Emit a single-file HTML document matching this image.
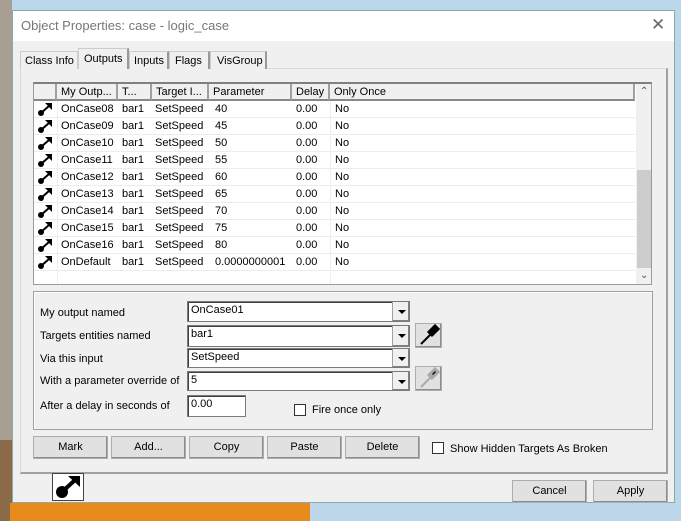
<!DOCTYPE html>
<html><head><meta charset="utf-8"><style>
*{box-sizing:border-box;margin:0;padding:0}
body{width:681px;height:521px;position:relative;overflow:hidden;font-family:"Liberation Sans",sans-serif;font-size:11px;color:#000;background:#bcd6ea}
.a{position:absolute;white-space:nowrap}
.btn{position:absolute;background:#e1e1e1;border:1px solid #adadad;box-shadow:inset -1px -1px 0 #8c8c8c;text-align:center;line-height:20px}
.combo{position:absolute;background:#fff;border:1px solid #7a7a7a;box-shadow:inset 1px 1px 0 #404040;padding:1px 3px;line-height:15px}
.combo .dd{position:absolute;right:0;top:0;bottom:0;width:17px;background:#f0f0f0;border-left:1px solid #a0a0a0;box-shadow:inset -1px -1px 0 #808080}
.combo .dd:after{content:"";position:absolute;left:5px;top:8px;border-left:4px solid transparent;border-right:4px solid transparent;border-top:4px solid #000}
.row{position:absolute;left:0;height:17px;width:601px;border-bottom:1px solid #ececec;line-height:17px;white-space:nowrap}
.row span{position:absolute;top:0}
.hd span{position:absolute;top:0;height:17px;border-right:2px solid #a0a0a0;border-bottom:2px solid #888;padding-left:4px;line-height:16px;background:#f0f0f0;white-space:nowrap;overflow:hidden}
.tab{position:absolute;border:1px solid #ccc;border-right:2px solid #999;border-bottom:none;white-space:nowrap;line-height:13px;background:#f0f0f0}
</style></head><body>
<div class="a" style="left:0;top:0;width:12px;height:521px;background:#a89f94"></div>
<div class="a" style="left:0;top:440px;width:12px;height:81px;background:#8b6a4a"></div>
<div class="a" style="left:10px;top:503px;width:300px;height:18px;background:#e98a1c"></div>
<div class="a" style="left:12px;top:10px;width:663px;height:493px;background:#f0f0f0;border:1px solid #8aa;"></div>
<div class="a" style="left:13px;top:11px;width:661px;height:30px;background:#fff"></div>
<div class="a" style="left:21px;top:18px;font-size:13px;color:#777">Object Properties: case - logic_case</div>
<div class="a" style="left:651px;top:15px;font-size:17px;color:#666">✕</div>
<div class="a" style="left:20px;top:68px;width:648px;height:406px;border:1px solid #d9d9d9;border-right:2px solid #a0a0a0;border-bottom:2px solid #a0a0a0;background:#f0f0f0"></div>
<div class="tab" style="left:20px;top:51px;width:58px;height:18px;padding:3px 4px;border-right:1px solid #ccc">Class Info</div>
<div class="tab" style="left:78px;top:48px;width:51px;height:21px;padding:4px 5px">Outputs</div>
<div class="tab" style="left:129px;top:51px;width:40px;height:18px;padding:3px 4px">Inputs</div>
<div class="tab" style="left:169px;top:51px;width:41px;height:18px;padding:3px 5px">Flags</div>
<div class="tab" style="left:210px;top:51px;width:57px;height:18px;padding:3px 6px">VisGroup</div>
<div class="a" style="left:33px;top:82px;width:619px;height:203px;background:#fff;border:1px solid #9a9a9a;border-top:2px solid #808080;overflow:hidden">
 <div class="hd" style="position:absolute;left:0;top:0;width:601px;height:17px">
  <span style="left:0;width:23px"></span>
  <span style="left:23px;width:61px">My Outp...</span>
  <span style="left:84px;width:34px">T...</span>
  <span style="left:118px;width:57px">Target I...</span>
  <span style="left:175px;width:83px">Parameter</span>
  <span style="left:258px;width:38px">Delay</span>
  <span style="left:296px;width:305px">Only Once</span>
 </div>
 <div class="a" style="left:23px;top:17px;width:1px;height:186px;background:#eee"></div>
 <div class="a" style="left:296px;top:17px;width:1px;height:186px;background:#eee"></div>
 <div id="rows"></div>
 <div class="a" style="left:602px;top:0;width:16px;height:201px;background:#f0f0f0">
  <div class="a" style="left:4px;top:2px;font-size:10px;color:#555">⌃</div>
  <div class="a" style="left:1px;top:86px;width:14px;height:98px;background:#cdcdcd"></div>
  <div class="a" style="left:4px;top:186px;font-size:10px;color:#555">⌄</div>
 </div>
</div>
<div class="a" style="left:33px;top:291px;width:620px;height:139px;border:1px solid #a0a0a0;box-shadow:inset 1px 1px 0 #fff"></div>
<div class="a" style="left:40px;top:307px">My output named</div>
<div class="a" style="left:40px;top:330px">Targets entities named</div>
<div class="a" style="left:40px;top:353px">Via this input</div>
<div class="a" style="left:40px;top:375px">With a parameter override of</div>
<div class="a" style="left:40px;top:400px">After a delay in seconds of</div>
<div class="combo" style="left:187px;top:301px;width:223px;height:21px">OnCase01<div class="dd"></div></div>
<div class="combo" style="left:187px;top:325px;width:223px;height:22px">bar1<div class="dd"></div></div>
<div class="combo" style="left:187px;top:348px;width:223px;height:20px">SetSpeed<div class="dd"></div></div>
<div class="combo" style="left:187px;top:371px;width:223px;height:20px">5<div class="dd"></div></div>
<div class="combo" style="left:187px;top:395px;width:59px;height:22px">0.00</div>
<div class="btn" style="left:415px;top:323px;width:27px;height:25px"><svg width="25" height="23"><path d="M6 19 L15 10 M9 16 L5 20" stroke="#000" stroke-width="2" fill="none"/><path d="M14 7 L19 2 L22 5 L17 10 Z M12 7 L17 12" stroke="#000" stroke-width="3"/></svg></div>
<div class="btn" style="left:415px;top:366px;width:27px;height:25px"><svg width="25" height="23"><path d="M6 19 L15 10 M9 16 L5 20" stroke="#aaa" stroke-width="2" fill="none"/><path d="M14 7 L19 2 L22 5 L17 10 Z M12 7 L17 12" stroke="#aaa" stroke-width="3"/></svg></div>
<div class="a" style="left:294px;top:404px;width:12px;height:12px;border:1px solid #333;background:#fff"></div>
<div class="a" style="left:312px;top:404px">Fire once only</div>
<div class="btn" style="left:33px;top:436px;width:75px;height:23px">Mark</div>
<div class="btn" style="left:111px;top:436px;width:75px;height:23px">Add...</div>
<div class="btn" style="left:189px;top:436px;width:75px;height:23px">Copy</div>
<div class="btn" style="left:267px;top:436px;width:75px;height:23px">Paste</div>
<div class="btn" style="left:345px;top:436px;width:75px;height:23px">Delete</div>
<div class="a" style="left:432px;top:442px;width:12px;height:12px;border:1px solid #333;background:#fff"></div>
<div class="a" style="left:450px;top:443px">Show Hidden Targets As Broken</div>
<div class="btn" style="left:512px;top:480px;width:75px;height:23px">Cancel</div>
<div class="btn" style="left:593px;top:480px;width:75px;height:23px">Apply</div>
<div class="a" style="left:52px;top:473px;width:32px;height:28px;background:#fff;border:1px solid #444"><svg width="30" height="26"><circle cx="9" cy="18" r="6" fill="#000"/><path d="M9 18 L22 6" stroke="#000" stroke-width="4"/><path d="M15 2 L27 2 L27 13 Z" fill="#000"/></svg></div>
<script>
var d=[["OnCase08","40"],["OnCase09","45"],["OnCase10","50"],["OnCase11","55"],["OnCase12","60"],["OnCase13","65"],["OnCase14","70"],["OnCase15","75"],["OnCase16","80"],["OnDefault","0.0000000001"]];
var h="";d.forEach(function(r,i){h+='<div class="row" style="top:'+(17+i*17)+'px"><span style="left:2px;top:1px"><svg width="18" height="15"><circle cx="5" cy="11" r="3" fill="#000"/><path d="M5 11 L13 4" stroke="#000" stroke-width="2"/><path d="M9 1 L16 1 L16 8 Z" fill="#000"/></svg></span><span style="left:27px">'+r[0]+'</span><span style="left:88px">bar1</span><span style="left:121px">SetSpeed</span><span style="left:181px">'+r[1]+'</span><span style="left:262px">0.00</span><span style="left:301px">No</span></div>';});
document.getElementById("rows").innerHTML=h;
</script>
</body></html>
